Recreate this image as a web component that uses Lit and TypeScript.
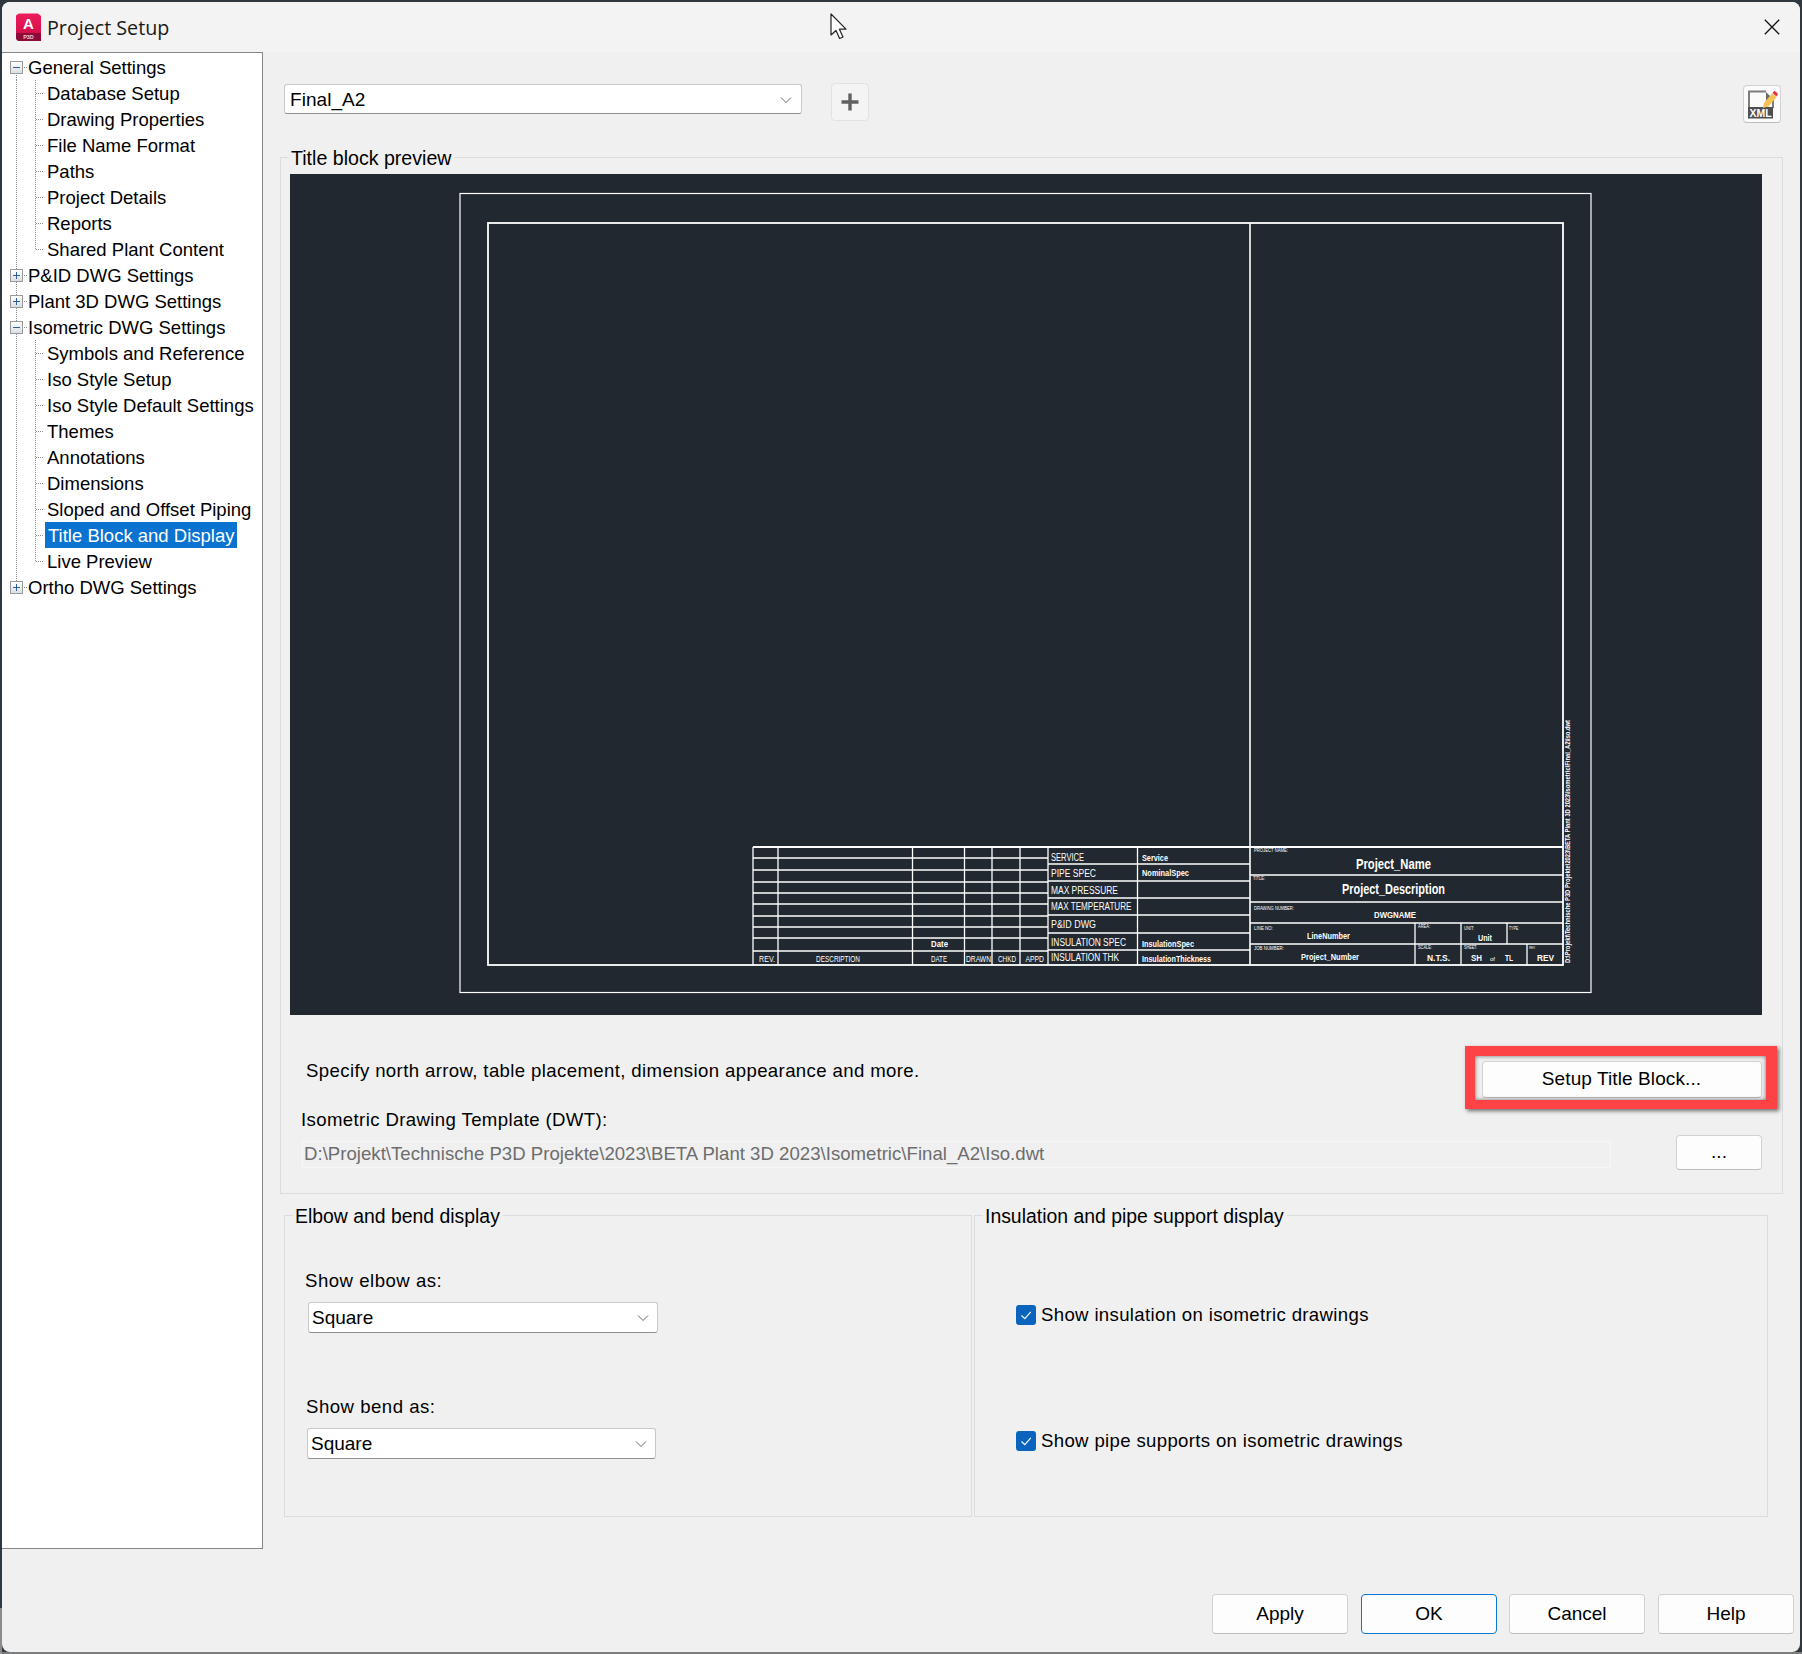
import { LitElement, html, css, svg } from "lit";
import { customElement } from "lit/decorators.js";

type TreeRow = { t: string; kind: "open" | "closed" | "child" | "last"; more?: boolean; sel?: boolean };

const TREE: TreeRow[] = [
  { t: "General Settings", kind: "open" },
  { t: "Database Setup", kind: "child" },
  { t: "Drawing Properties", kind: "child" },
  { t: "File Name Format", kind: "child" },
  { t: "Paths", kind: "child" },
  { t: "Project Details", kind: "child" },
  { t: "Reports", kind: "child" },
  { t: "Shared Plant Content", kind: "last" },
  { t: "P&ID DWG Settings", kind: "closed" },
  { t: "Plant 3D DWG Settings", kind: "closed" },
  { t: "Isometric DWG Settings", kind: "open" },
  { t: "Symbols and Reference", kind: "child" },
  { t: "Iso Style Setup", kind: "child" },
  { t: "Iso Style Default Settings", kind: "child" },
  { t: "Themes", kind: "child" },
  { t: "Annotations", kind: "child" },
  { t: "Dimensions", kind: "child" },
  { t: "Sloped and Offset Piping", kind: "child" },
  { t: "Title Block and Display", kind: "child", sel: true },
  { t: "Live Preview", kind: "last" },
  { t: "Ortho DWG Settings", kind: "closed" },
];

// [x1, y1, x2, y2, width]
const LINES: number[][] = [
  // left revision table verticals
  [753, 847, 753, 965, 1.3], [778, 847, 778, 965, 1.3], [912.5, 847, 912.5, 965, 1.3], [964.5, 847, 964.5, 965, 1.3],
  [992, 847, 992, 965, 1.3], [1020, 847, 1020, 965, 1.3], [1048, 847, 1048, 965, 1.3], [1137.5, 847, 1137.5, 965, 1.3],
  // revision rows
  ...[858, 870, 882, 893, 904, 916, 927, 938, 951].map((y) => [753, y, 1048, y, 1.3]),
  // service rows
  ...[864, 881, 898, 915, 933, 950].map((y) => [1048, y, 1250, y, 1.3]),
  // main block
  [1250, 223, 1250, 965, 1.6], [753, 847, 1563, 847, 1.8],
  ...[875, 902, 923, 944].map((y) => [1250, y, 1563, y, 1.3]),
  [1415, 923, 1415, 965, 1.3], [1461, 923, 1461, 965, 1.3], [1507, 923, 1507, 944, 1.3], [1527, 944, 1527, 965, 1.3],
];

// [text, x1, x2, baseline, size, bold]
const TEXTS: [string, number, number, number, number, number][] = [
  ["SERVICE", 1051, 1084, 861, 10, 0], ["PIPE SPEC", 1051, 1096, 877, 10, 0], ["MAX PRESSURE", 1051, 1118, 894, 10, 0],
  ["MAX TEMPERATURE", 1051, 1131.5, 910, 10, 0], ["P&ID DWG", 1051, 1096, 928, 10, 0],
  ["INSULATION SPEC", 1051, 1126, 946, 10, 0], ["INSULATION THK", 1051, 1119, 961, 10, 0],
  ["Service", 1142, 1168, 861, 8.5, 1], ["NominalSpec", 1142, 1189, 876, 8.5, 1],
  ["InsulationSpec", 1142, 1194, 947, 8.5, 1], ["InsulationThickness", 1142, 1211, 962, 8.5, 1],
  ["Date", 931, 948, 947, 8.5, 1], ["REV.", 759, 775, 962, 8.5, 0], ["DESCRIPTION", 816, 860, 962, 8.5, 0],
  ["DATE", 931, 947, 962, 8.5, 0], ["DRAWN", 966, 991, 962, 8.5, 0], ["CHKD", 998, 1016, 962, 8.5, 0], ["APPD", 1025.5, 1044, 962, 8.5, 0],
  ["PROJECT NAME:", 1254, 1288, 852, 5, 0], ["Project_Name", 1356, 1431, 868.5, 14, 1], ["TITLE:", 1253, 1265, 880, 5, 0],
  ["Project_Description", 1342, 1445, 893.5, 14, 1], ["DRAWING NUMBER:", 1254, 1294, 910, 5, 0], ["DWGNAME", 1374, 1416, 917.5, 9, 1],
  ["LINE NO:", 1254, 1273, 930, 5, 0], ["LineNumber", 1307, 1350, 938.5, 9.5, 1], ["AREA:", 1418, 1430, 928, 5, 0],
  ["UNIT:", 1464, 1474, 930, 5, 0], ["Unit", 1478, 1492, 940.5, 9.5, 1], ["TYPE:", 1509, 1519, 930, 5, 0],
  ["JOB NUMBER:", 1254, 1284, 950, 5, 0], ["Project_Number", 1301, 1359, 959.5, 9.5, 1], ["SCALE:", 1418, 1432, 949, 5, 0],
  ["N.T.S.", 1427, 1450, 961, 9.5, 1], ["SHEET:", 1464, 1477, 949, 5, 0], ["SH", 1471, 1482, 961, 9.5, 1], ["of", 1490, 1495, 961, 5, 0],
  ["TL", 1505, 1513, 961, 9.5, 1], ["REV", 1529, 1535, 949, 4, 0], ["REV", 1537, 1554, 961, 9.5, 1],
];

@customElement("app-root")
export class AppRoot extends LitElement {
  static styles = css`
    :host { display: block; width: 1802px; height: 1654px; background: linear-gradient(#8c8c8c, #8c8c8c) 0 1608px / 2px 46px no-repeat, linear-gradient(#2f383f 0 1652px, #7e7e7e 1652px); font-family: "Liberation Sans", Arial, sans-serif; color: #000; overflow: hidden; }
    .window { box-sizing: border-box; margin: 2px 0 0 2px; width: 1798px; height: 1650px; background: #f0f0f0; border-radius: 8px; display: flex; flex-direction: column; overflow: hidden; }
    .titlebar { height: 50px; flex: none; display: flex; align-items: center; padding: 0 20px 0 13px; background: #f3f3f3; }
    .app-icon { width: 27px; height: 28px; display: block; }
    .title { font-family: "Open Sans", sans-serif; font-size: 19.7px; color: #1a1a1a; margin-left: 5px; }
    .close { margin-left: auto; width: 16px; height: 16px; display: block; }
    .cursor { position: absolute; left: 829px; top: 13px; width: 20px; height: 28px; }
    .body { flex: 1; display: flex; min-height: 0; }
    .tree { box-sizing: border-box; width: 261px; height: 1497px; flex: none; background: #fff; border: 1px solid #868686; border-left: none; padding-top: 1px; font-size: 18.5px; }
    .row { height: 26px; display: flex; align-items: flex-start; white-space: nowrap; }
    .guide { flex: none; display: block; height: 26px; }
    .label { box-sizing: border-box; height: 26px; padding: 1px 1px 0; line-height: 26px; }
    .label.sel { background: #0a73cf; color: #fff; margin-left: -1px; padding: 1px 3px 0 3px; }
    .main { flex: 1; min-width: 0; padding-top: 32px; display: flex; flex-direction: column; }
    .toolbar { display: flex; align-items: flex-start; margin-left: 21px; height: 41px; }
    .combo { box-sizing: border-box; background: #fff; border: 1px solid #c9c9c9; border-bottom-color: #8f8f8f; border-radius: 3px; display: flex; align-items: center; justify-content: space-between; font-size: 19px; flex: none; }
    .combo.final { width: 518px; height: 30px; padding: 1px 9px 0 5px; letter-spacing: .06px; }
    .combo.s1 { width: 350px; height: 31px; margin-left: 23px; padding: 1px 8px 0 3px; }
    .combo.s2 { width: 349px; height: 31px; margin-left: 22px; padding: 1px 8px 0 3px; }
    .chev { width: 12px; height: 8px; display: block; }
    .btn { box-sizing: border-box; background: #fdfdfd; border: 1px solid #d2d2d2; border-bottom-color: #bdbdbd; border-radius: 4px; display: flex; align-items: center; justify-content: center; font-size: 19px; flex: none; padding-bottom: 1px; }
    .plus { width: 38px; height: 38px; margin: -1px 0 0 29px; background: #f4f4f4; border-color: #e2e2e2; padding: 0; }
    .plus svg { width: 18px; height: 18px; display: block; }
    .xml { width: 38px; height: 38px; margin: 1px 19px 0 auto; background: #fbfbfb; padding: 0; }
    .xml svg { width: 32px; height: 30px; display: block; }
    .group { box-sizing: border-box; border: 1px solid #dcdcdc; }
    .legend { width: fit-content; margin: -12px 0 0 8px; padding: 0 3px 0 2px; background: #f0f0f0; font-size: 19.4px; line-height: 24px; }
    .g-preview { margin: 32px 0 0 17px; width: 1503px; padding: 0 0 23px 9px; }
    .g-preview .legend { margin-left: -1px; font-size: 19.6px; }
    .preview { display: block; width: 1472px; height: 841px; margin-top: 4px; background: #212830; }
    .action { display: flex; justify-content: space-between; align-items: flex-start; width: 1472px; height: 37px; margin-top: 46px; }
    .desc { margin-left: 16px; font-size: 18.6px; line-height: 20px; letter-spacing: .375px; }
    .setup-wrap { position: relative; width: 280px; height: 37px; }
    .setup { width: 100%; height: 100%; letter-spacing: .1px; padding-right: 1px; }
    .red { position: absolute; left: -17px; top: -15px; width: 291px; height: 44px; border-style: solid; border-color: #fd4345; border-width: 10px 11px 9px 10px; box-shadow: 2px 2px 4px rgba(0,0,0,.55), inset 0 0 4px rgba(0,0,0,.55); pointer-events: none; }
    .tpl-label { margin: 11px 0 0 11px; font-size: 18.6px; letter-spacing: .38px; line-height: 22px; }
    .path-row { display: flex; align-items: flex-start; width: 1472px; margin-top: 4px; }
    .path { box-sizing: border-box; margin: 6px 0 0 12px; width: 1309px; height: 27px; border: 1px solid #f7f7f7; color: #6d6d6d; font-size: 18.6px; line-height: 23.5px; white-space: nowrap; padding-left: 1px; letter-spacing: .02px; }
    .dots { width: 86px; height: 35px; margin-left: auto; }
    .lower { display: flex; gap: 2px; margin: 21px 0 0 21px; }
    .g-a { width: 688px; height: 302px; }
    .g-b { width: 794px; height: 302px; }
    .field-label { font-size: 18.6px; line-height: 22px; letter-spacing: .5px; }
    .l1 { margin: 42px 0 10px 20px; }
    .l2 { margin: 63px 0 10px 21px; }
    .checks { display: flex; flex-direction: column; gap: 104px; margin: 76px 0 0 41px; }
    .check { display: flex; align-items: center; gap: 5px; height: 22px; font-size: 18.6px; letter-spacing: .34px; white-space: nowrap; }
    .box { width: 20px; height: 20px; border-radius: 3px; background: #0a63bd; display: block; flex: none; }
    .footer { display: flex; justify-content: flex-end; gap: 13px; margin-top: 77px; padding-right: 6px; }
    .foot { width: 136px; height: 40px; }
    .ok { border-color: #0a78d4; margin-right: -1px; }
    text { fill: #fff; font-family: "Liberation Sans", sans-serif; }
  `;

  private guide(r: TreeRow, i: number) {
    const root = r.kind === "open" || r.kind === "closed";
    const lastRoot = i === TREE.length - 1;
    const line = "stroke:#8a8a8a;stroke-width:1;stroke-dasharray:1 1;shape-rendering:crispEdges";
    if (root) {
      return html`<svg class="guide" width="25" height="26" viewBox="0 0 25 26">
        <line x1="14.5" y1=${i === 0 ? 13 : 0} x2="14.5" y2=${lastRoot ? 13 : 26} style=${line}></line>
        <line x1="20" y1="13.5" x2="25" y2="13.5" style=${line}></line>
        <defs><linearGradient id="bx" x1="0" y1="0" x2="0" y2="1"><stop offset="0" stop-color="#fff"></stop><stop offset="1" stop-color="#d9dde3"></stop></linearGradient></defs>
        <rect x="8.5" y="7.5" width="12" height="12" fill="url(#bx)" stroke="#9a9a9a" shape-rendering="crispEdges"></rect>
        <line x1="11" y1="13.5" x2="18" y2="13.5" stroke="#2f5d97" shape-rendering="crispEdges"></line>
        ${r.kind === "closed" ? svg`<line x1="14.5" y1="10" x2="14.5" y2="17" stroke="#2f5d97" shape-rendering="crispEdges"></line>` : ""}
      </svg>`;
    }
    return html`<svg class="guide" width="44" height="26" viewBox="0 0 44 26">
      <line x1="14.5" y1="0" x2="14.5" y2="26" style=${line}></line>
      <line x1="33.5" y1="0" x2="33.5" y2=${r.kind === "last" ? 13 : 26} style=${line}></line>
      <line x1="34" y1="13.5" x2="42" y2="13.5" style=${line}></line>
    </svg>`;
  }

  private preview() {
    return html`<svg class="preview" viewBox="290 174 1472 841">
      <rect x="460" y="193.5" width="1131" height="799" fill="none" stroke="#fff" stroke-width="1.2"></rect>
      <rect x="488" y="223" width="1075" height="742" fill="none" stroke="#fff" stroke-width="1.8"></rect>
      ${LINES.map((l) => svg`<line x1=${l[0]} y1=${l[1]} x2=${l[2]} y2=${l[3]} stroke="#fff" stroke-width=${l[4]}></line>`)}
      ${TEXTS.map(([t, a, b, y, s, w]) => svg`<text x=${a} y=${y} font-size=${s} font-weight=${w ? 700 : 400} textLength=${b - a} lengthAdjust="spacingAndGlyphs">${t}</text>`)}
      <text x="1570" y="963" font-size="7.5" font-weight="700" transform="rotate(-90 1570 963)" textLength="243" lengthAdjust="spacingAndGlyphs">D:\\Projekt\\Technische P3D Projekte\\2023\\BETA Plant 3D 2023\\Isometric\\Final_A2\\Iso.dwt</text>
    </svg>`;
  }

  private chev() {
    return html`<svg class="chev" viewBox="0 0 12 8"><path d="M1 1.5 6 6.5 11 1.5" fill="none" stroke="#666" stroke-width="1"></path></svg>`;
  }

  private checkBox() {
    return html`<svg class="box" viewBox="0 0 20 20"><path d="M5.5 10.5 8.8 13.6 14.8 6.8" fill="none" stroke="#fff" stroke-width="1.1"></path></svg>`;
  }

  render() {
    return html`<div class="window">
      <div class="titlebar">
        <svg class="app-icon" viewBox="0 0 27 28">
          <defs><linearGradient id="ai" x1="0" y1="0" x2="0" y2="1"><stop offset="0" stop-color="#ee1c5c"></stop><stop offset="1" stop-color="#d4104c"></stop></linearGradient></defs>
          <path d="M1 2.5 4 0.5H23L26 3V20H1Z" fill="url(#ai)"></path>
          <path d="M1 20H26V28H3L1 26Z" fill="#8d0b38"></path>
          <text x="13.5" y="16" text-anchor="middle" font-size="15" font-weight="700" style="fill:#fff">A</text>
          <text x="13.5" y="26" text-anchor="middle" font-size="5.5" font-weight="700" style="fill:#f4c9d6">P3D</text>
        </svg>
        <span class="title">Project Setup</span>
        <svg class="close" viewBox="0 0 16 16"><path d="M.8.8 15.2 15.2M15.2.8.8 15.2" stroke="#111" stroke-width="1.3" fill="none"></path></svg>
      </div>
      <svg class="cursor" viewBox="0 0 20 28"><path d="M2 1V22L7 17.5 10.6 25.5 14 24 10.4 16.2H17Z" fill="#fff" stroke="#222" stroke-width="1.2" stroke-linejoin="round"></path></svg>
      <div class="body">
        <div class="tree">
          ${TREE.map((r, i) => html`<div class="row">${this.guide(r, i)}<span class="label ${r.sel ? "sel" : ""}">${r.t}</span></div>`)}
        </div>
        <div class="main">
          <div class="toolbar">
            <div class="combo final"><span>Final_A2</span>${this.chev()}</div>
            <div class="btn plus"><svg viewBox="0 0 18 18"><path d="M9 0.5V17.5M.5 9H17.5" stroke="#606060" stroke-width="3.4"></path></svg></div>
            <div class="btn xml">
              <svg viewBox="0 0 32 30">
                <path d="M3 19V2.5H20" fill="none" stroke="#7d7d7d" stroke-width="2"></path>
                <path d="M27 10V19" stroke="#7d7d7d" stroke-width="2"></path>
                <path d="M20 3 25 8 20 12Z" fill="#6a6a6a"></path>
                <rect x="2" y="18" width="25" height="11.5" fill="#4f4f4f"></rect>
                <text x="14.5" y="28" text-anchor="middle" font-size="10.5" font-weight="700" style="fill:#fff">XML</text>
                <path d="M18 14 26 4.5 30.5 8 22.5 17.5 17 19Z" fill="#f6c253"></path>
                <path d="M26.5 4 28.5 1.8 32 4.7 30.5 7.5Z" fill="#ec2f3a"></path>
              </svg>
            </div>
          </div>
          <div class="group g-preview">
            <div class="legend">Title block preview</div>
            ${this.preview()}
            <div class="action">
              <span class="desc">Specify north arrow, table placement, dimension appearance and more.</span>
              <div class="setup-wrap">
                <div class="btn setup">Setup Title Block...</div>
                <div class="red"></div>
              </div>
            </div>
            <div class="tpl-label">Isometric Drawing Template (DWT):</div>
            <div class="path-row">
              <div class="path">D:\\Projekt\\Technische P3D Projekte\\2023\\BETA Plant 3D 2023\\Isometric\\Final_A2\\Iso.dwt</div>
              <div class="btn dots">...</div>
            </div>
          </div>
          <div class="lower">
            <div class="group g-a">
              <div class="legend">Elbow and bend display</div>
              <div class="field-label l1">Show elbow as:</div>
              <div class="combo s1"><span>Square</span>${this.chev()}</div>
              <div class="field-label l2">Show bend as:</div>
              <div class="combo s2"><span>Square</span>${this.chev()}</div>
            </div>
            <div class="group g-b">
              <div class="legend">Insulation and pipe support display</div>
              <div class="checks">
                <div class="check">${this.checkBox()}<span>Show insulation on isometric drawings</span></div>
                <div class="check">${this.checkBox()}<span>Show pipe supports on isometric drawings</span></div>
              </div>
            </div>
          </div>
          <div class="footer">
            <div class="btn foot">Apply</div>
            <div class="btn foot ok">OK</div>
            <div class="btn foot">Cancel</div>
            <div class="btn foot">Help</div>
          </div>
        </div>
      </div>
    </div>`;
  }
}
